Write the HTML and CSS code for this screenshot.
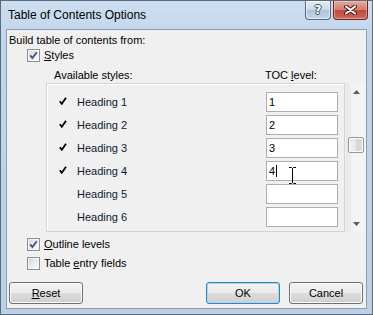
FILE: index.html
```html
<!DOCTYPE html>
<html>
<head>
<meta charset="utf-8">
<link rel="stylesheet" href="styles.css">
</head>
<body>
<div class="window">
  <div class="titlebar">
    <span class="title">Table of Contents Options</span>
    <div class="caption">
      <div class="cap-btn help"><span>?</span></div>
      <div class="cap-btn close">
        <svg width="13" height="10" viewBox="0 0 13 10"><path d="M2 1.5 L11 8.5 M11 1.5 L2 8.5" stroke="#4a1612" stroke-width="4" stroke-linecap="round"/><path d="M2 1.5 L11 8.5 M11 1.5 L2 8.5" stroke="#ffffff" stroke-width="2.2" stroke-linecap="round"/></svg>
      </div>
    </div>
  </div>
  <div class="client">
    <div class="build">Build table of contents from:</div>
    <div class="check-row">
      <span class="cb"><svg width="11" height="11" viewBox="0 0 11 11"><path d="M2.2 5.4 L4.4 8 L8.8 2.2" fill="none" stroke="#3f5489" stroke-width="1.9"/></svg></span>
      <span><u>S</u>tyles</span>
    </div>
    <div class="colheads">
      <span>Available styles:</span>
      <span>TOC <u>l</u>evel:</span>
    </div>
    <div class="pane">
      <div class="listbox">
        <div class="row">
          <span class="mark"><svg width="8" height="8" viewBox="0 0 8 8"><path d="M0.8 4.2 L2.8 6.8 L7 0.8" fill="none" stroke="#000" stroke-width="1.8"/></svg></span>
          <span class="name">Heading 1</span>
          <span class="field">1</span>
        </div>
        <div class="row">
          <span class="mark"><svg width="8" height="8" viewBox="0 0 8 8"><path d="M0.8 4.2 L2.8 6.8 L7 0.8" fill="none" stroke="#000" stroke-width="1.8"/></svg></span>
          <span class="name">Heading 2</span>
          <span class="field">2</span>
        </div>
        <div class="row">
          <span class="mark"><svg width="8" height="8" viewBox="0 0 8 8"><path d="M0.8 4.2 L2.8 6.8 L7 0.8" fill="none" stroke="#000" stroke-width="1.8"/></svg></span>
          <span class="name">Heading 3</span>
          <span class="field">3</span>
        </div>
        <div class="row">
          <span class="mark"><svg width="8" height="8" viewBox="0 0 8 8"><path d="M0.8 4.2 L2.8 6.8 L7 0.8" fill="none" stroke="#000" stroke-width="1.8"/></svg></span>
          <span class="name">Heading 4</span>
          <span class="field active">4<span class="caret"></span>
            <svg class="ibeam" width="9" height="17" viewBox="0 0 9 17"><path d="M1 0.5 H3.5 L4.5 1.5 L5.5 0.5 H8 M4.5 1.5 V15.5 M1 16.5 H3.5 L4.5 15.5 L5.5 16.5 H8" fill="none" stroke="#000" stroke-width="1"/></svg>
          </span>
        </div>
        <div class="row">
          <span class="mark"></span>
          <span class="name">Heading 5</span>
          <span class="field"></span>
        </div>
        <div class="row">
          <span class="mark"></span>
          <span class="name">Heading 6</span>
          <span class="field"></span>
        </div>
      </div>
      <div class="scrollbar">
        <div class="arrow"><svg width="7" height="4" viewBox="0 0 7 4"><path d="M0 4 L3.5 0 L7 4 Z" fill="#5a5a5a"/></svg></div>
        <div class="thumb"></div>
        <div class="track"></div>
        <div class="arrow"><svg width="7" height="4" viewBox="0 0 7 4"><path d="M0 0 L3.5 4 L7 0 Z" fill="#5a5a5a"/></svg></div>
      </div>
    </div>
    <div class="check-row outline">
      <span class="cb"><svg width="11" height="11" viewBox="0 0 11 11"><path d="M2.2 5.4 L4.4 8 L8.8 2.2" fill="none" stroke="#3f5489" stroke-width="1.9"/></svg></span>
      <span><u>O</u>utline levels</span>
    </div>
    <div class="check-row entry">
      <span class="cb"></span>
      <span>Table <u>e</u>ntry fields</span>
    </div>
    <div class="btnrow">
      <div class="btn"><span><u>R</u>eset</span></div>
      <div class="btn default ok">OK</div>
      <div class="btn cancel">Cancel</div>
    </div>
  </div>
</div>
</body>
</html>
```
FILE: styles.css
```css
* { box-sizing: border-box; }
body {
  margin: 0;
  font-family: "Liberation Sans", Arial, sans-serif;
  font-size: 11px;
  color: #000;
  background: #ffffff;
}
.window {
  width: 373px;
  height: 315px;
  border: 1px solid #5b6b7e;
  background: linear-gradient(#cddef0, #c0d5eb 40px, #bcd1e8);
  display: flex;
  flex-direction: column;
}
.titlebar {
  height: 28px;
  display: flex;
  align-items: flex-start;
  padding-left: 7px;
}
.title {
  font-size: 12px;
  line-height: 28px;
  color: #000;
}
.caption {
  margin-left: auto;
  margin-right: 4px;
  display: flex;
  gap: 2px;
}
.cap-btn {
  height: 19px;
  border: 1px solid #56697f;
  border-top: none;
  border-radius: 0 0 4px 4px;
  display: flex;
  align-items: center;
  justify-content: center;
}
.help {
  width: 26px;
  background: linear-gradient(#e3ecf5 0%, #c9d8e8 50%, #aec3da 51%, #c2d6ea 100%);
  box-shadow: inset 0 0 0 1px rgba(255,255,255,0.55);
}
.help span {
  font-family: "DejaVu Sans", sans-serif;
  font-weight: bold;
  font-size: 12px;
  color: #fff;
  line-height: 12px;
  text-shadow: 1px 0 #3d4e63, -1px 0 #3d4e63, 0 1px #3d4e63, 0 -1px #3d4e63;
}
.close {
  width: 35px;
  border-color: #6b2520;
  background: linear-gradient(#e7a99f 0%, #d47a6e 50%, #c2473b 51%, #d0675a 100%);
  box-shadow: inset 0 0 0 1px rgba(255,220,210,0.45);
}
.client {
  flex: 1;
  margin: 0 5px 5px 5px;
  border: 1px solid #8a9db3;
  background: #f0f0f0;
  display: flex;
  flex-direction: column;
  padding-top: 2px;
}
.build {
  line-height: 16px;
  padding-left: 2px;
}
.check-row {
  height: 14px;
  margin-left: 20px;
  display: flex;
  align-items: center;
  gap: 4px;
  line-height: 14px;
}
.cb {
  width: 13px;
  height: 13px;
  border: 1px solid #8e8f8f;
  background: linear-gradient(135deg, #d3d6da 0%, #eeeff0 60%, #fbfbfb 100%);
  box-shadow: inset 0 0 0 1px #f6f6f6;
  display: flex;
  align-items: center;
  justify-content: center;
}
.colheads {
  margin-top: 5px;
  height: 16px;
  line-height: 16px;
  display: grid;
  grid-template-columns: 211px 1fr;
  padding-left: 47px;
}
.pane {
  height: 149px;
  margin-left: 39px;
  display: flex;
  gap: 1px;
}
.listbox {
  width: 299px;
  border: 1px solid #cdd5de;
  box-shadow: inset 1px 1px 0 #ffffff;
  padding-top: 6px;
}
.row {
  height: 23px;
  display: flex;
  align-items: center;
  color: #0d1a30;
}
.mark {
  width: 30px;
  padding-left: 12px;
  display: flex;
  align-items: center;
  height: 10px;
  margin-top: -2px;
}
.name {
  width: 189px;
}
.field {
  position: relative;
  width: 72px;
  height: 20px;
  border: 1px solid #abadb3;
  background: #fff;
  color: #000;
  padding-left: 2px;
  line-height: 18px;
  display: flex;
  align-items: center;
}
.caret {
  display: inline-block;
  width: 1px;
  height: 12px;
  background: #000;
  margin-left: 1px;
}
.ibeam {
  position: absolute;
  left: 21px;
  top: 5px;
}
.scrollbar {
  width: 20px;
  display: flex;
  flex-direction: column;
  align-items: center;
  background: linear-gradient(90deg, #e6e6e6, #f4f4f4 40%, #f4f4f4);
}
.arrow {
  height: 17px;
  width: 100%;
  display: flex;
  align-items: center;
  justify-content: center;
}
.thumb {
  margin-top: 37px;
  width: 16px;
  height: 16px;
  border: 1px solid #979797;
  border-radius: 2px;
  background: linear-gradient(90deg, #f2f2f2 0%, #e6e6e6 50%, #d6d6d6 51%, #dcdcdc 100%);
  box-shadow: inset 0 0 0 1px #fbfbfb;
}
.track { flex: 1; }
.outline { margin-top: 5px; }
.entry { margin-top: 5px; }
.btnrow {
  margin-top: 12px;
  display: flex;
  padding: 0 3px 0 2px;
}
.btn {
  width: 74px;
  height: 22px;
  border: 1px solid #707070;
  border-radius: 3px;
  background: linear-gradient(#f2f2f2 0%, #ebebeb 49%, #dddddd 50%, #cfcfcf 100%);
  box-shadow: inset 0 0 0 1px #fbfbfb;
  display: flex;
  align-items: center;
  justify-content: center;
  line-height: 14px;
}
.ok { margin-left: auto; }
.cancel { margin-left: 9px; }
.default {
  border-color: #3c7fb1;
  box-shadow: inset 0 0 0 1px #9fdcf6;
}
```
